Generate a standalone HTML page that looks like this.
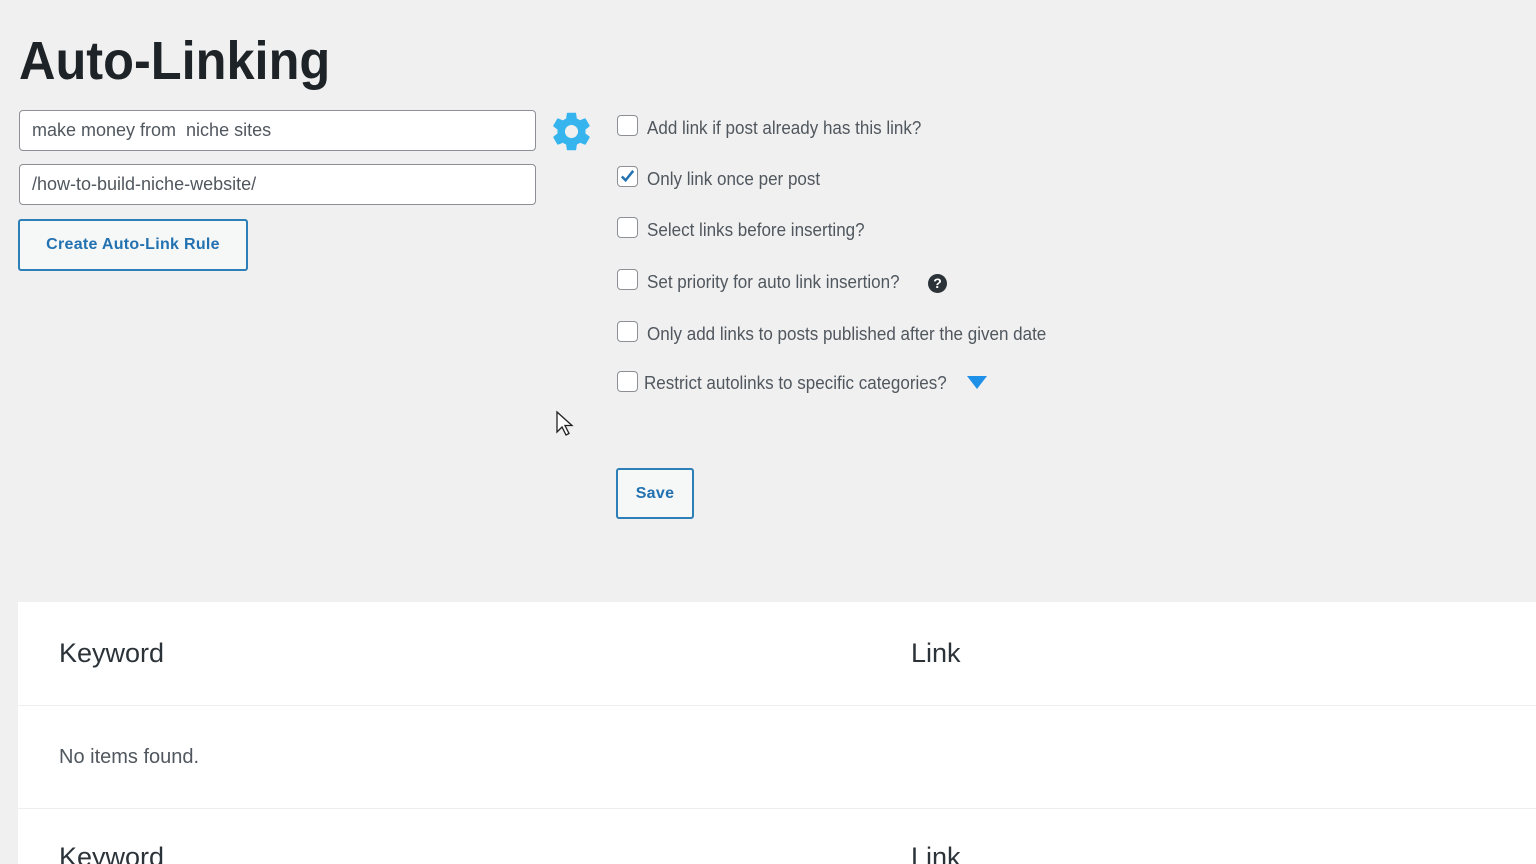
<!DOCTYPE html>
<html><head><meta charset="utf-8"><style>
*{box-sizing:border-box;margin:0;padding:0}
html,body{width:1536px;height:864px;overflow:hidden}
body{background:#f0f0f0;font-family:"Liberation Sans",sans-serif;color:#3c434a;position:relative}
.a{position:absolute}
h1{position:absolute;left:19px;top:30px;font-size:54px;font-weight:bold;color:#1d2327;transform:scaleX(0.935);transform-origin:left top;white-space:nowrap}
.inp{position:absolute;left:19px;width:517px;height:41px;background:#fff;border:1px solid #8c8f94;border-radius:4px;font-size:18px;padding:9px 12px;color:#50575e}
.btn{position:absolute;border:2px solid #2d7fb8;border-radius:3px;color:#2271b1;font-weight:bold;font-size:18px;background:#f6f7f7;text-align:center;letter-spacing:.3px}
.cb{position:absolute;left:617px;width:21px;height:21px;border:1px solid #8c8f94;border-radius:4px;background:#fff}
.lb{position:absolute;left:647px;font-size:18.5px;color:#50575e;transform:scaleX(0.92);transform-origin:left top;white-space:nowrap}
.panel{position:absolute;left:18px;top:602px;width:1518px;height:262px;background:#fff}
.th{position:absolute;font-size:27px;color:#2c3338}
</style></head><body>
<h1>Auto-Linking</h1>
<div class="inp" style="top:110px">make money from&nbsp; niche sites</div>
<div class="inp" style="top:164px">/how-to-build-niche-website/</div>
<div class="btn" style="left:18px;top:219px;width:230px;height:52px;line-height:48px;font-size:16px">Create Auto-Link Rule</div>
<svg class="a" style="left:549px;top:109px" width="45" height="45" viewBox="0 0 24 24"><path fill="#35b4ee" d="M19.4 13c.04-.33.06-.66.06-1s-.02-.67-.06-1l2.1-1.650c.2-.15.24-.42.12-.64l-2-3.46c-.12-.22-.39-.3-.61-.22l-2.490 1c-.52-.4-1.080-.73-1.690-.98l-.38-2.650C14.46 2.180 14.25 2 14 2h-4c-.25 0-.46.18-.49.42l-.38 2.650c-.61.25-1.170.59-1.690.98l-2.490-1c-.23-.09-.49 0-.61.22l-2 3.46c-.13.22-.07.49.12.64L4.57 11c-.04.33-.07.66-.07 1s.03.67.07 1l-2.110 1.650c-.19.15-.24.42-.12.64l2 3.46c.12.22.39.3.61.22l2.490-1c.52.4 1.080.73 1.690.98l.38 2.650c.03.24.24.42.49.42h4c.25 0 .46-.18.49-.42l.38-2.650c.61-.25 1.170-.59 1.690-.98l2.490 1c.23.09.49 0 .61-.22l2-3.46c.12-.22.07-.49-.12-.64L19.4 13zM12 15.5c-1.930 0-3.5-1.570-3.5-3.5s1.570-3.5 3.5-3.5 3.5 1.570 3.5 3.5-1.570 3.5-3.5 3.5z"/></svg>
<div class="cb" style="top:115px"></div><div class="lb" style="top:117px">Add link if post already has this link?</div>
<div class="cb" style="top:166px"><svg width="19" height="19" viewBox="0 0 20 20" style="position:absolute;left:0;top:0"><path d="M4 10l4 4 8-10" stroke="#2271b1" stroke-width="2.6" fill="none"/></svg></div><div class="lb" style="top:168px">Only link once per post</div>
<div class="cb" style="top:217px"></div><div class="lb" style="top:219px">Select links before inserting?</div>
<div class="cb" style="top:269px"></div><div class="lb" style="top:271px">Set priority for auto link insertion?</div>
<div class="a" style="left:928px;top:274px;width:19px;height:19px;border-radius:50%;background:#2c3338;color:#fff;font-size:14px;font-weight:bold;text-align:center;line-height:19px">?</div>
<div class="cb" style="top:321px"></div><div class="lb" style="top:323px">Only add links to posts published after the given date</div>
<div class="cb" style="top:371px"></div><div class="lb" style="top:372px;left:644px">Restrict autolinks to specific categories?</div>
<svg class="a" style="left:967px;top:376px" width="20" height="14"><path d="M0 0h20L10 13z" fill="#1e90e8"/></svg>
<svg class="a" style="left:555px;top:410px" width="20" height="28"><path d="M2 2v20l5-5 4 8 3-1.5-4-8h7z" fill="#fff" stroke="#222" stroke-width="1.3"/></svg>
<div class="btn" style="left:616px;top:468px;width:78px;height:51px;line-height:47px;font-size:16px">Save</div>
<div class="panel"></div>
<div class="th" style="left:59px;top:638px">Keyword</div>
<div class="th" style="left:911px;top:638px">Link</div>
<div class="a" style="left:18px;top:705px;width:1518px;height:1px;background:#eee"></div>
<div class="a" style="left:59px;top:746px;font-size:20px;color:#50575e">No items found.</div>
<div class="a" style="left:18px;top:808px;width:1518px;height:1px;background:#eee"></div>
<div class="th" style="left:59px;top:842px">Keyword</div>
<div class="th" style="left:911px;top:842px">Link</div>
</body></html>
